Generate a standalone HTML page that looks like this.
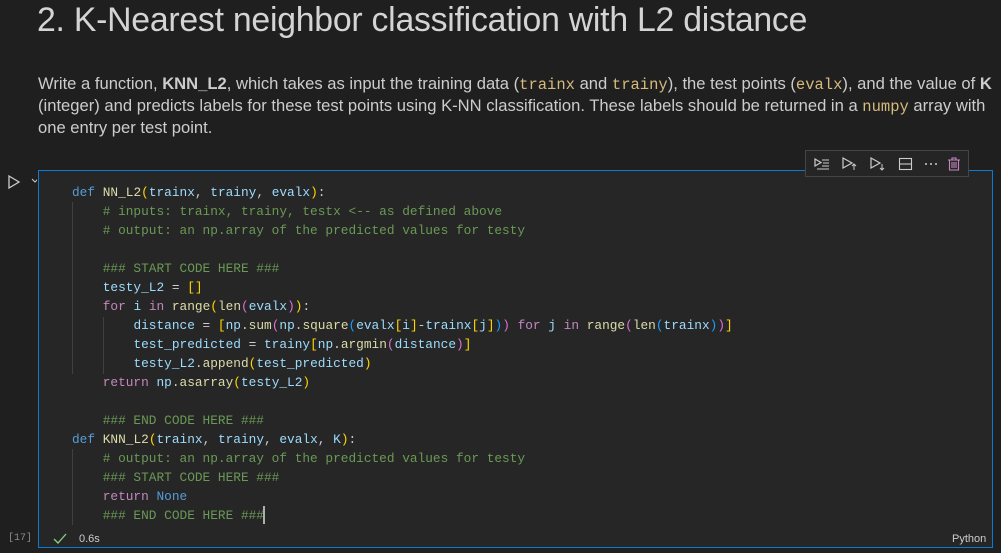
<!DOCTYPE html>
<html><head><meta charset="utf-8"><style>
body{margin:0;width:1001px;height:553px;background:#1f1f1f;overflow:hidden;position:relative;font-family:"Liberation Sans",sans-serif;color:#cccccc}
.t{position:absolute;left:37px;top:1px;font-size:33.8px;white-space:nowrap;letter-spacing:-0.25px;color:#d4d4d4}
.p{position:absolute;left:38px;font-size:16.6px;white-space:nowrap;letter-spacing:0px}
.p code{font-family:"Liberation Mono",monospace;color:#d7ba7d;font-size:15.5px}
.cell{position:absolute;left:38px;top:170px;width:955px;height:378px;border:1px solid #0a7ad4;background:#262626;box-sizing:border-box}
.code{position:absolute;left:72px;top:182.5px;font-family:"Liberation Mono",monospace;font-size:12.8px;line-height:19px;white-space:pre;color:#cccccc}
.k{color:#569cd6}.f{color:#dcdcaa}.v{color:#9cdcfe}.c{color:#6a9955}.m{color:#c586c0}.y{color:#ffd700}.pk{color:#da70d6}.b{color:#179fff}.o{color:#d4d4d4}
.g{position:absolute;width:1px;background:#404040}
.tb{position:absolute;left:805px;top:150px;width:164px;height:27px;border:1px solid #454545;background:#252526;box-sizing:border-box}
.tb svg{position:absolute;top:6px}
</style></head><body>
<div class="t">2. K-Nearest neighbor classification with L2 distance</div>
<div class="p" style="top:74px">Write a function, <b>KNN_L2</b>, which takes as input the training data (<code>trainx</code> and <code>trainy</code>), the test points (<code>evalx</code>), and the value of <b>K</b></div>
<div class="p" style="top:96px">(integer) and predicts labels for these test points using K-NN classification. These labels should be returned in a <code>numpy</code> array with</div>
<div class="p" style="top:118px">one entry per test point.</div>

<svg style="position:absolute;left:7px;top:174px" width="30" height="16"><path d="M2 2 L12 8 L2 14 Z" fill="none" stroke="#cccccc" stroke-width="1.3"/><path d="M25 5 L28 8 L31 5" fill="none" stroke="#cccccc" stroke-width="1"/></svg>

<div class="cell"></div>
<div class="g" style="left:72px;top:202px;height:172px"></div>
<div class="g" style="left:103px;top:317px;height:57px"></div>
<div class="g" style="left:72px;top:449px;height:76px"></div>
<div class="code"><span class="k">def</span> <span class="f">NN_L2</span><span class="y">(</span><span class="v">trainx</span>, <span class="v">trainy</span>, <span class="v">evalx</span><span class="y">)</span>:
    <span class="c"># inputs: trainx, trainy, testx &lt;-- as defined above</span>
    <span class="c"># output: an np.array of the predicted values for testy</span>

    <span class="c">### START CODE HERE ###</span>
    <span class="v">testy_L2</span> = <span class="y">[]</span>
    <span class="m">for</span> <span class="v">i</span> <span class="m">in</span> <span class="f">range</span><span class="y">(</span><span class="f">len</span><span class="pk">(</span><span class="v">evalx</span><span class="pk">)</span><span class="y">)</span>:
        <span class="v">distance</span> = <span class="y">[</span><span class="v">np</span>.<span class="f">sum</span><span class="pk">(</span><span class="v">np</span>.<span class="f">square</span><span class="b">(</span><span class="v">evalx</span><span class="y">[</span><span class="v">i</span><span class="y">]</span>-<span class="v">trainx</span><span class="y">[</span><span class="v">j</span><span class="y">]</span><span class="b">)</span><span class="pk">)</span> <span class="m">for</span> <span class="v">j</span> <span class="m">in</span> <span class="f">range</span><span class="pk">(</span><span class="f">len</span><span class="b">(</span><span class="v">trainx</span><span class="b">)</span><span class="pk">)</span><span class="y">]</span>
        <span class="v">test_predicted</span> = <span class="v">trainy</span><span class="y">[</span><span class="v">np</span>.<span class="f">argmin</span><span class="pk">(</span><span class="v">distance</span><span class="pk">)</span><span class="y">]</span>
        <span class="v">testy_L2</span>.<span class="f">append</span><span class="y">(</span><span class="v">test_predicted</span><span class="y">)</span>
    <span class="m">return</span> <span class="v">np</span>.<span class="f">asarray</span><span class="y">(</span><span class="v">testy_L2</span><span class="y">)</span>

    <span class="c">### END CODE HERE ###</span>
<span class="k">def</span> <span class="f">KNN_L2</span><span class="y">(</span><span class="v">trainx</span>, <span class="v">trainy</span>, <span class="v">evalx</span>, <span class="v">K</span><span class="y">)</span>:
    <span class="c"># output: an np.array of the predicted values for testy</span>
    <span class="c">### START CODE HERE ###</span>
    <span class="m">return</span> <span class="k">None</span>
    <span class="c">### END CODE HERE ###</span></div>
<div style="position:absolute;left:263px;top:506px;width:2px;height:18px;background:#aeafad"></div>

<div class="tb">
<svg style="left:8px" width="16" height="14"><path d="M1 2 L7 5.5 L1 9 Z" fill="none" stroke="#ccc" stroke-width="1.2"/><path d="M8 3H15M9 6H15M8 9H15M3 12H15" stroke="#ccc" stroke-width="1.1"/></svg>
<svg style="left:35px" width="16" height="14"><path d="M2 1 L11 6 L2 11 Z" fill="none" stroke="#ccc" stroke-width="1.2"/><path d="M13 13V7M11 9L13 7L15 9" fill="none" stroke="#ccc" stroke-width="1"/></svg>
<svg style="left:63px" width="16" height="14"><path d="M2 1 L11 6 L2 11 Z" fill="none" stroke="#ccc" stroke-width="1.2"/><path d="M13 7V13M11 11L13 13L15 11" fill="none" stroke="#ccc" stroke-width="1"/></svg>
<svg style="left:92px" width="16" height="14"><rect x="1.5" y="1.5" width="12" height="11" fill="none" stroke="#ccc" stroke-width="1.1"/><path d="M1.5 7H13.5" stroke="#ccc" stroke-width="1.1"/></svg>
<svg style="left:117px" width="16" height="14"><circle cx="3" cy="7" r="1" fill="#ccc"/><circle cx="8" cy="7" r="1" fill="#ccc"/><circle cx="13" cy="7" r="1" fill="#ccc"/></svg>
<svg style="left:140px" width="16" height="14"><path d="M2 3H14M6 3V1H10V3M3.5 3.5V13H12.5V3.5M6 5V11M8 5V11M10 5V11" fill="none" stroke="#c586c0" stroke-width="1.1"/></svg>
</div>

<div style="position:absolute;left:8px;top:533px;font-size:10px;color:#8b8b8b;font-family:'Liberation Mono',monospace">[17]</div>
<svg style="position:absolute;left:53px;top:533px" width="14" height="12"><path d="M1 6L5 10L13 1" fill="none" stroke="#89d185" stroke-width="1.3"/></svg>
<div style="position:absolute;left:79px;top:533px;font-size:11px;color:#cccccc">0.6s</div>
<div style="position:absolute;left:952px;top:533px;font-size:11px;color:#cccccc">Python</div>
</body></html>
